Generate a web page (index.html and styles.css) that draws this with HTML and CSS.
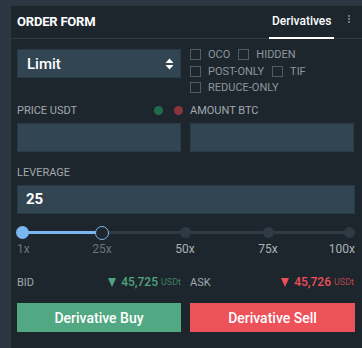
FILE: index.html
```html
<!DOCTYPE html>
<html>
<head>
<meta charset="utf-8">
<link rel="stylesheet" href="styles.css">
</head>
<body>
<div class="panel">
  <div class="header">
    <div class="title">ORDER FORM</div>
    <div class="tabs">
      <div class="tab active">Derivatives</div>
      <div class="kebab"><span></span><span></span><span></span></div>
    </div>
  </div>
  <div class="content">
    <div class="row1">
      <div class="select">
        <span>Limit</span>
        <svg class="updown" width="9" height="12" viewBox="0 0 9 12"><path d="M4.5 0.5 L8.5 5 L0.5 5 Z M0.5 7 L8.5 7 L4.5 11.5 Z" fill="#ffffff"/></svg>
      </div>
      <div class="checks">
        <div class="crow"><label class="chk"><i></i>OCO</label><label class="chk"><i></i>HIDDEN</label></div>
        <div class="crow"><label class="chk"><i></i>POST-ONLY</label><label class="chk"><i></i>TIF</label></div>
        <div class="crow"><label class="chk"><i></i>REDUCE-ONLY</label></div>
      </div>
    </div>
    <div class="row2">
      <div class="field">
        <div class="flabel"><span>PRICE USDT</span><span class="dots"><i class="dot green"></i><i class="dot red"></i></span></div>
        <div class="input"></div>
      </div>
      <div class="field">
        <div class="flabel"><span>AMOUNT BTC</span></div>
        <div class="input"></div>
      </div>
    </div>
    <div class="lev">
      <div class="flabel"><span>LEVERAGE</span></div>
      <div class="input big">25</div>
    </div>
    <div class="slider">
      <div class="track"></div>
      <div class="fill"></div>
      <i class="stop s1"></i>
      <i class="stop s2"></i>
      <i class="stop s3"></i>
      <i class="stop s4"></i>
      <i class="stop s5"></i>
    </div>
    <div class="ticks">
      <span class="t1 past">1x</span>
      <span class="t2 past">25x</span>
      <span class="t3">50x</span>
      <span class="t4">75x</span>
      <span class="t5">100x</span>
    </div>
    <div class="quotes">
      <div class="quote">
        <span class="qlabel">BID</span>
        <span class="qval buy"><i class="tri"></i><b>45,725</b><small>USDt</small></span>
      </div>
      <div class="quote">
        <span class="qlabel">ASK</span>
        <span class="qval sell"><i class="tri"></i><b>45,726</b><small>USDt</small></span>
      </div>
    </div>
    <div class="buttons">
      <button class="btn buy-btn">Derivative Buy</button>
      <button class="btn sell-btn">Derivative Sell</button>
    </div>
  </div>
</div>
</body>
</html>
```

FILE: styles.css
```css
* { box-sizing: border-box; }
html, body { margin: 0; padding: 0; }
body {
  background: #2a3641;
  font-family: Roboto, "Liberation Sans", sans-serif;
  width: 362px;
  height: 348px;
  overflow: hidden;
  padding: 6px 0 0 11px;
}
.panel {
  background: #1e262d;
  height: 342px;
  width: 351px;
}
.header {
  height: 33px;
  border-bottom: 1px solid #313b44;
  display: flex;
  align-items: stretch;
  justify-content: space-between;
  padding-left: 6px;
}
.title {
  color: #ffffff;
  font-size: 13px;
  font-weight: 700;
  line-height: 32px;
  letter-spacing: -0.2px;
}
.tabs { display: flex; align-items: stretch; }
.tab {
  color: #ffffff;
  font-size: 12px;
  font-weight: 500;
  line-height: 30px;
  padding: 0 3px 0 3px;
  border-bottom: 2px solid #ffffff;
  margin-bottom: -1px;
  width: 65px;
  text-align: center;
}
.kebab {
  width: 28px;
  display: flex;
  flex-direction: column;
  align-items: center;
  justify-content: center;
  gap: 1px;
  padding-bottom: 6px;
  padding-left: 2px;
}
.kebab span { width: 2px; height: 2px; background: #6c757c; display: block; }
.content { padding: 10px 7px 0 6px; }
.row1 {
  display: grid;
  grid-template-columns: 164px 164px;
  column-gap: 9px;
  height: 44px;
}
.select {
  height: 29px;
  background: #324553;
  border: 1px solid #2b3a46;
  display: flex;
  align-items: center;
  justify-content: space-between;
  padding: 0 6px 0 9px;
  color: #ffffff;
  font-size: 15px;
  font-weight: 500;
}
.updown { display: block; }
.checks { display: flex; flex-direction: column; gap: 5.5px; padding-top: 0; }
.crow { display: flex; gap: 8px; height: 11px; }
.chk {
  display: flex;
  align-items: center;
  gap: 7px;
  color: #8d969d;
  font-size: 11px;
  line-height: 11px;
}
.chk i {
  width: 11px;
  height: 11px;
  border: 1px solid #525c65;
  display: block;
}
.row2 {
  display: grid;
  grid-template-columns: 164px 164px;
  column-gap: 9px;
  margin-top: 11px;
}
.flabel {
  display: flex;
  justify-content: space-between;
  align-items: center;
  height: 13px;
  color: #a1a9af;
  font-size: 11px;
  line-height: 13px;
}
.dots { display: flex; gap: 11px; margin-right: -2px; }
.dot { width: 9px; height: 9px; border-radius: 50%; display: block; }
.dot.green { background: #1f6b4d; }
.dot.red { background: #8a343b; }
.input {
  margin-top: 6px;
  height: 29px;
  background: #324553;
  border: 1px solid #2a3a46;
}
.lev { margin-top: 14px; }
.input.big {
  color: #ffffff;
  font-size: 15px;
  font-weight: 700;
  line-height: 27px;
  padding-left: 8px;
}
.slider {
  position: relative;
  height: 14px;
  margin-top: 11px;
  margin-left: 5px;
  margin-right: 6px;
}
.track {
  position: absolute;
  left: 0; right: 0;
  top: 6px;
  height: 3px;
  background: #2e3a44;
}
.fill {
  position: absolute;
  left: 0;
  width: 80px;
  top: 6px;
  height: 3px;
  background: #7ab6f0;
}
.stop {
  position: absolute;
  top: 2px;
  width: 11px;
  height: 11px;
  margin-left: -5.5px;
  border-radius: 50%;
  background: #2e3a44;
  display: block;
}
.s1 { left: 0; width: 13px; height: 13px; top: 1px; margin-left: -6.5px; background: #7ab6f0; }
.s2 { left: 80px; width: 14px; height: 14px; top: 0.5px; margin-left: -7px; background: #1e262d; border: 1.5px solid #7ab6f0; }
.s3 { left: 163px; }
.s4 { left: 246px; }
.s5 { left: 327px; }
.ticks {
  height: 14px;
  margin-top: 3px;
  font-size: 12px;
  line-height: 14px;
  color: #aab2b8;
  display: flex;
}
.ticks span { width: 40px; text-align: center; flex: none; }
.ticks .t1 { width: 30px; text-align: left; }
.ticks .t2 { margin-left: 35px; }
.ticks .t3 { margin-left: 43px; }
.ticks .t4 { margin-left: 43px; }
.ticks .t5 { margin-left: auto; text-align: right; width: 30px; }
.ticks .past { color: #69737b; }
.quotes {
  display: grid;
  grid-template-columns: 164px 164px;
  column-gap: 9px;
  margin-top: 19px;
  height: 14px;
}
.quote {
  display: flex;
  justify-content: space-between;
  align-items: center;
}
.qlabel { color: #a1a9af; font-size: 11px; }
.qval { display: flex; align-items: center; font-size: 12px; }
.qval b { font-weight: 500; margin-left: 5px; }
.qval small { font-size: 9px; margin-left: 3px; }
.tri {
  display: block;
  width: 0; height: 0;
  border-left: 4.5px solid transparent;
  border-right: 4.5px solid transparent;
  border-top: 9px solid currentColor;
}
.buy { color: #4ea57d; }
.buy small { color: #3d7f62; }
.sell { color: #ec4f59; }
.sell small { color: #b7434b; }
.buttons {
  display: grid;
  grid-template-columns: 164px 165px;
  column-gap: 9px;
  margin-top: 14px;
}
.btn {
  height: 29px;
  border: none;
  color: #ffffff;
  font-family: Roboto, "Liberation Sans", sans-serif;
  font-size: 14px;
  font-weight: 500;
  padding: 0;
}
.buy-btn { background: #52a883; }
.sell-btn { background: #ed5159; }
```
